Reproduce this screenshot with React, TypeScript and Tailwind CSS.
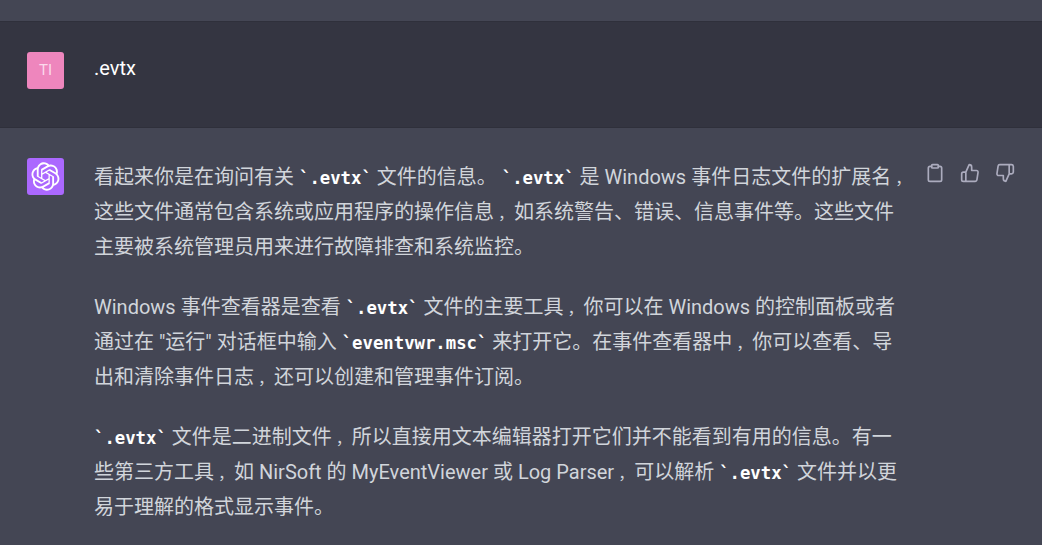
import { FiClipboard, FiThumbsUp, FiThumbsDown } from "react-icons/fi";
import type { ReactNode } from "react";

const LOGO =
  "M37.5324 16.8707C37.9808 15.5241 38.1363 14.0974 37.9886 12.6859C37.8409 11.2744 37.3934 9.91076 36.676 8.68622C35.6126 6.83404 33.9882 5.3676 32.0373 4.4985C30.0864 3.62941 27.9098 3.40259 25.8215 3.85078C24.8796 2.7893 23.7219 1.94125 22.4257 1.36341C21.1295 0.785575 19.7249 0.491269 18.3058 0.500197C16.1708 0.495044 14.0893 1.16803 12.3614 2.42214C10.6335 3.67624 9.34853 5.44666 8.6917 7.47815C7.30085 7.76286 5.98686 8.3414 4.8377 9.17505C3.68854 10.0087 2.73073 11.0782 2.02839 12.312C0.956464 14.1591 0.498905 16.2988 0.721698 18.4228C0.944492 20.5467 1.83612 22.5449 3.268 24.1293C2.81966 25.4759 2.66413 26.9026 2.81182 28.3141C2.95951 29.7256 3.40701 31.0892 4.12437 32.3138C5.18791 34.1659 6.8123 35.6322 8.76321 36.5013C10.7141 37.3704 12.8907 37.5973 14.9789 37.1492C15.9208 38.2107 17.0786 39.0587 18.3747 39.6366C19.6709 40.2144 21.0755 40.5087 22.4946 40.4998C24.6307 40.5054 26.7133 39.8321 28.4418 38.5772C30.1704 37.3223 31.4556 35.5506 32.1119 33.5179C33.5027 33.2332 34.8167 32.6547 35.9659 31.821C37.115 30.9874 38.0728 29.9178 38.7752 28.684C39.8458 26.8371 40.3023 24.6979 40.0789 22.5748C39.8556 20.4517 38.9639 18.4544 37.5324 16.8707ZM22.4978 37.8849C20.7443 37.8874 19.0459 37.2733 17.6994 36.1501C17.7601 36.117 17.8666 36.0586 17.936 36.0161L25.9004 31.4156C26.1003 31.3019 26.2663 31.137 26.3813 30.9378C26.4964 30.7386 26.5563 30.5124 26.5549 30.2825V19.0542L29.9213 20.998C29.9389 21.0068 29.9541 21.0198 29.9656 21.0359C29.977 21.052 29.9842 21.0707 29.9867 21.0902V30.3889C29.9842 32.375 29.1946 34.2791 27.7909 35.6841C26.3872 37.0892 24.4838 37.8806 22.4978 37.8849ZM6.39227 31.0064C5.51397 29.4888 5.19742 27.7107 5.49804 25.9832C5.55718 26.0187 5.66048 26.0818 5.73461 26.1244L13.699 30.7248C13.8975 30.8408 14.1233 30.902 14.3532 30.902C14.583 30.902 14.8088 30.8408 15.0073 30.7248L24.731 25.1103V28.9979C24.7321 29.0177 24.7283 29.0376 24.7199 29.0556C24.7115 29.0736 24.6988 29.0893 24.6829 29.1012L16.6317 33.7497C14.9096 34.7416 12.8643 35.0097 10.9447 34.4954C9.02506 33.9811 7.38785 32.7263 6.39227 31.0064ZM4.29707 13.6194C5.17156 12.0998 6.55279 10.9364 8.19885 10.3327C8.19885 10.4013 8.19491 10.5228 8.19491 10.6071V19.808C8.19351 20.0378 8.25334 20.2638 8.36823 20.4629C8.48312 20.6619 8.64893 20.8267 8.84863 20.9404L18.5723 26.5542L15.206 28.4979C15.1894 28.5089 15.1703 28.5155 15.1505 28.5173C15.1307 28.5191 15.1107 28.516 15.0924 28.5082L7.04046 23.8557C5.32135 22.8601 4.06716 21.2235 3.55289 19.3046C3.03862 17.3858 3.30624 15.3413 4.29707 13.6194ZM31.955 20.0556L22.2312 14.4411L25.5976 12.4981C25.6142 12.4872 25.6333 12.4805 25.6531 12.4787C25.6729 12.4769 25.6928 12.4801 25.7111 12.4879L33.7631 17.1364C34.9967 17.849 36.0017 18.8982 36.6606 20.1613C37.3194 21.4244 37.6047 22.849 37.4832 24.2684C37.3617 25.6878 36.8382 27.0432 35.9743 28.1759C35.1103 29.3086 33.9415 30.1717 32.6047 30.6641C32.6047 30.5947 32.6047 30.4733 32.6047 30.3889V21.188C32.6066 20.9586 32.5474 20.7328 32.4332 20.5338C32.319 20.3348 32.154 20.1698 31.955 20.0556ZM35.3055 15.0128C35.2464 14.9765 35.1431 14.9142 35.069 14.8717L27.1045 10.2712C26.906 10.1554 26.6803 10.0943 26.4504 10.0943C26.2206 10.0943 25.9948 10.1554 25.7963 10.2712L16.0726 15.8858V11.9982C16.0715 11.9783 16.0753 11.9585 16.0837 11.9405C16.0921 11.9225 16.1048 11.9068 16.1207 11.8949L24.1719 7.25025C25.4053 6.53903 26.8121 6.19376 28.2299 6.25482C29.6477 6.31589 31.0154 6.78077 32.1742 7.59508C33.333 8.40939 34.2349 9.53945 34.7756 10.8531C35.3163 12.1667 35.4735 13.6095 35.2286 15.0078L35.3055 15.0128ZM14.2424 21.9419L10.8752 19.9981C10.8576 19.9893 10.8423 19.9763 10.8309 19.9602C10.8195 19.9441 10.8122 19.9254 10.8098 19.9058V10.6071C10.8107 9.18295 11.2173 7.78848 11.9819 6.58696C12.7466 5.38544 13.8377 4.42659 15.1275 3.82264C16.4173 3.21869 17.8524 2.99464 19.2649 3.1767C20.6775 3.35876 22.0089 3.93941 23.1034 4.85067C23.0427 4.88379 22.937 4.94215 22.8668 4.98473L14.9024 9.58517C14.7025 9.69878 14.5366 9.86356 14.4215 10.0626C14.3065 10.2616 14.2466 10.4877 14.2479 10.7175L14.2424 21.9419ZM16.071 17.9991L20.4018 15.4978L24.7325 17.9975V22.9985L20.4018 25.4983L16.071 22.9985V17.9991Z";

function Code({ children }: { children: string }) {
  return <code className="font-['DejaVu_Sans_Mono',monospace] text-[17.3px] font-bold text-white">`{children}`</code>;
}

// the reference sets its full-width comma in the middle of the em box
const C = () => <span className="pl-[4px] text-[16px]">，</span>;

function Line({ children }: { children: ReactNode }) {
  return <div className="h-[35px] whitespace-nowrap leading-[35px]">{children}</div>;
}

export default function App() {
  return (
    <div className="h-[545px] w-[1042px] overflow-hidden bg-[#444654] font-['Roboto','Noto_Sans_CJK_SC',sans-serif] text-[#d1d5db]">
      <div className="h-[22px] border-b border-[#2f303b]" />

      <div className="flex h-[106px] gap-[30px] border-b border-[#2f303b] bg-[#343541] pl-[27px] pt-[30px]">
        <div className="flex h-[37px] w-[37px] items-center justify-center rounded-[3px] bg-[#ee86bd] text-[15px] text-[#fbd9ec]">TI</div>
        <p className="text-[20px] leading-[32px] text-white">.evtx</p>
      </div>

      <div className="flex px-[27px] pt-[30px]">
        <div className="flex h-[37px] w-[37px] shrink-0 items-center justify-center rounded-[3px] bg-[#ab68ff]">
          <svg width="29" height="29" viewBox="0 0 41 41" fill="white">
            <path d={LOGO} />
          </svg>
        </div>

        <div className="ml-[30px] w-[831px] shrink-0 pt-[2px] text-[20px]">
          <div className="mb-[25px]">
            <Line>看起来你是在询问有关 <Code>.evtx</Code> 文件的信息。 <Code>.evtx</Code> 是 Windows 事件日志文件的扩展名<C /></Line>
            <Line>这些文件通常包含系统或应用程序的操作信息<C />如系统警告、错误、信息事件等。这些文件</Line>
            <Line>主要被系统管理员用来进行故障排查和系统监控。</Line>
          </div>
          <div className="mb-[25px]">
            <Line>Windows 事件查看器是查看 <Code>.evtx</Code> 文件的主要工具<C />你可以在 Windows 的控制面板或者</Line>
            <Line>通过在 "运行" 对话框中输入 <Code>eventvwr.msc</Code> 来打开它。在事件查看器中<C />你可以查看、导</Line>
            <Line>出和清除事件日志<C />还可以创建和管理事件订阅。</Line>
          </div>
          <div>
            <Line><Code>.evtx</Code> 文件是二进制文件<C />所以直接用文本编辑器打开它们并不能看到有用的信息。有一</Line>
            <Line>些第三方工具<C />如 NirSoft 的 MyEventViewer 或 Log Parser<C />可以解析 <Code>.evtx</Code> 文件并以更</Line>
            <Line>易于理解的格式显示事件。</Line>
          </div>
        </div>

        <div className="mt-[5px] flex h-[22px] gap-[15px] text-[#acacbe]">
          <FiClipboard size={20} />
          <FiThumbsUp size={20} />
          <FiThumbsDown size={20} />
        </div>
      </div>
    </div>
  );
}
